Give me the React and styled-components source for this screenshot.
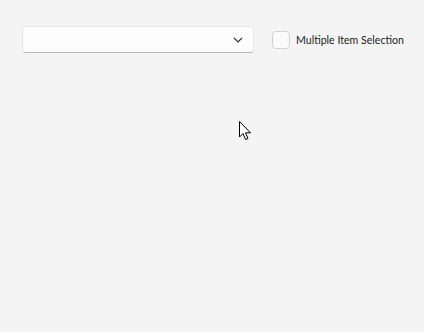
import React from 'react';
import styled, { createGlobalStyle } from 'styled-components';

const GlobalStyle = createGlobalStyle`
    html, body {
        margin: 0;
        padding: 0;
        background: #f4f4f4;
        font-family: "Segoe UI", "Noto Sans", "Liberation Sans", sans-serif;
    }
    #root {
        min-height: 332px;
        position: relative;
    }
`

const Page = styled.div`
    padding: 26px 0 0 22px;
`

const Toolbar = styled.div`
    display: flex;
    align-items: center;
    gap: 18px;
`

const ComboBox = styled.div`
    box-sizing: border-box;
    width: 232px;
    height: 27px;
    background: #fdfdfd;
    border: 1px solid #e5e5e5;
    border-bottom-color: #b8b8b8;
    border-radius: 4px;
    display: flex;
    align-items: center;
    justify-content: flex-end;
    padding-right: 10px;
`

const CheckLabel = styled.label`
    display: flex;
    align-items: center;
    gap: 6px;
    font-family: Lato, "Liberation Sans", sans-serif;
    font-size: 10.6px;
    color: #1b1b1b;
`

const Box = styled.span`
    box-sizing: border-box;
    width: 18px;
    height: 18px;
    border: 1px solid #d2d2d2;
    border-radius: 4px;
    background: #fbfbfb;
`

const Cursor = styled.svg`
    position: absolute;
    left: 239px;
    top: 121px;
`

export default function App() {
    return (
        <Page>
            <GlobalStyle />
            <Toolbar>
                <ComboBox>
                    <svg width="10" height="6" viewBox="0 0 10 6">
                        <path d="M1 1 L5 5 L9 1" fill="none" stroke="#333" strokeWidth="1.2" />
                    </svg>
                </ComboBox>
                <CheckLabel>
                    <Box />
                    Multiple Item Selection
                </CheckLabel>
            </Toolbar>
            <Cursor width="13" height="20" viewBox="0 0 13 20">
                <path d="M0.5 0.5 L0.5 16 L4 12.5 L6.5 18.5 L9 17.5 L6.5 11.8 L11.5 11.8 Z" fill="#fff" stroke="#000" strokeWidth="1" />
            </Cursor>
        </Page>
    )
}
